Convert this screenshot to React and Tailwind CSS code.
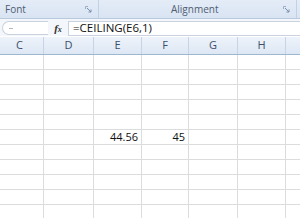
import React from 'react';

const cols = ['C', 'D', 'E', 'F', 'G', 'H', ''];
const widths = [48, 50, 48, 47, 49, 48, 48];

const rows = Array.from({ length: 11 }, (_, i) => i);

const DialogLauncher = () => (
    <svg width="7" height="7" viewBox="0 0 7 7" className="shrink-0">
        <path d="M0.5 0.5 H3 M0.5 0.5 V3" stroke="#9aaec6" strokeWidth="1" fill="none" />
        <path d="M2 2 L6 6 M6 3.5 V6 H3.5" stroke="#7890ae" strokeWidth="1" fill="none" />
    </svg>
);

const App = () => {
    return (
        <div className="w-[300px] h-[218px] overflow-hidden bg-white" style={{ fontFamily: '"Open Sans", "Liberation Sans", sans-serif' }}>
            {/* Ribbon groups */}
            <div className="h-[19px] flex bg-gradient-to-b from-[#e4ecf7] to-[#d9e4f3] border-b border-[#b9c9de]">
                <div className="w-[99px] flex items-center justify-between pl-[5px] pr-[6px] border-r border-[#c2d1e4]">
                    <span className="text-[10px] text-[#4e5d72] leading-none">Font</span>
                    <DialogLauncher />
                </div>
                <div className="w-[198px] flex items-center pl-[72px] pr-[6px] justify-between border-r border-[#c2d1e4]">
                    <span className="text-[10px] text-[#4e5d72] leading-none">Alignment</span>
                    <DialogLauncher />
                </div>
            </div>

            {/* Formula bar */}
            <div className="h-[17px] flex items-center bg-[#f3f6fa] pt-[1px]">
                <div className="w-[46px] h-[14px] ml-[2px] rounded-l-full border border-[#c9d2de] border-r-0 bg-white flex items-center pl-[6px]">
                    <div className="w-[4px] h-[1px] bg-[#b0b8c4]" />
                </div>
                <div className="w-[20px] flex justify-center">
                    <span className="text-[11px] italic font-bold text-[#333]" style={{ fontFamily: '"Liberation Serif", serif' }}>
                        f<span className="text-[8px]">x</span>
                    </span>
                </div>
                <div className="flex-1 h-[15px] bg-white border border-[#c9d2de] border-r-0 flex items-center pl-[4px]">
                    <span className="text-[11.5px] text-[#111] leading-none">=CEILING(E6,1)</span>
                </div>
            </div>

            {/* Grid */}
            <div className="ml-[-4px] mt-[1px]">
                <div className="flex h-[18px] bg-gradient-to-b from-[#eef3fa] to-[#dde7f4] border-b border-[#9eb6ce]">
                    {cols.map((c, i) => (
                        <div
                            key={i}
                            style={{ width: widths[i] }}
                            className="shrink-0 h-full flex items-center justify-center border-r border-[#c5d4e6] text-[11px] text-[#3a4f6c]"
                        >
                            {c}
                        </div>
                    ))}
                </div>
                {rows.map((r) => (
                    <div key={r} className="flex h-[15px] border-b border-[#dadcdd]">
                        {cols.map((c, i) => (
                            <div
                                key={i}
                                style={{ width: widths[i] }}
                                className="shrink-0 h-full border-r border-[#dadcdd] flex items-center justify-end pr-[3px] text-[11px] text-[#111]"
                            >
                                {r === 5 && c === 'E' ? '44.56' : r === 5 && c === 'F' ? '45' : ''}
                            </div>
                        ))}
                    </div>
                ))}
            </div>
        </div>
    );
};

export default App;
